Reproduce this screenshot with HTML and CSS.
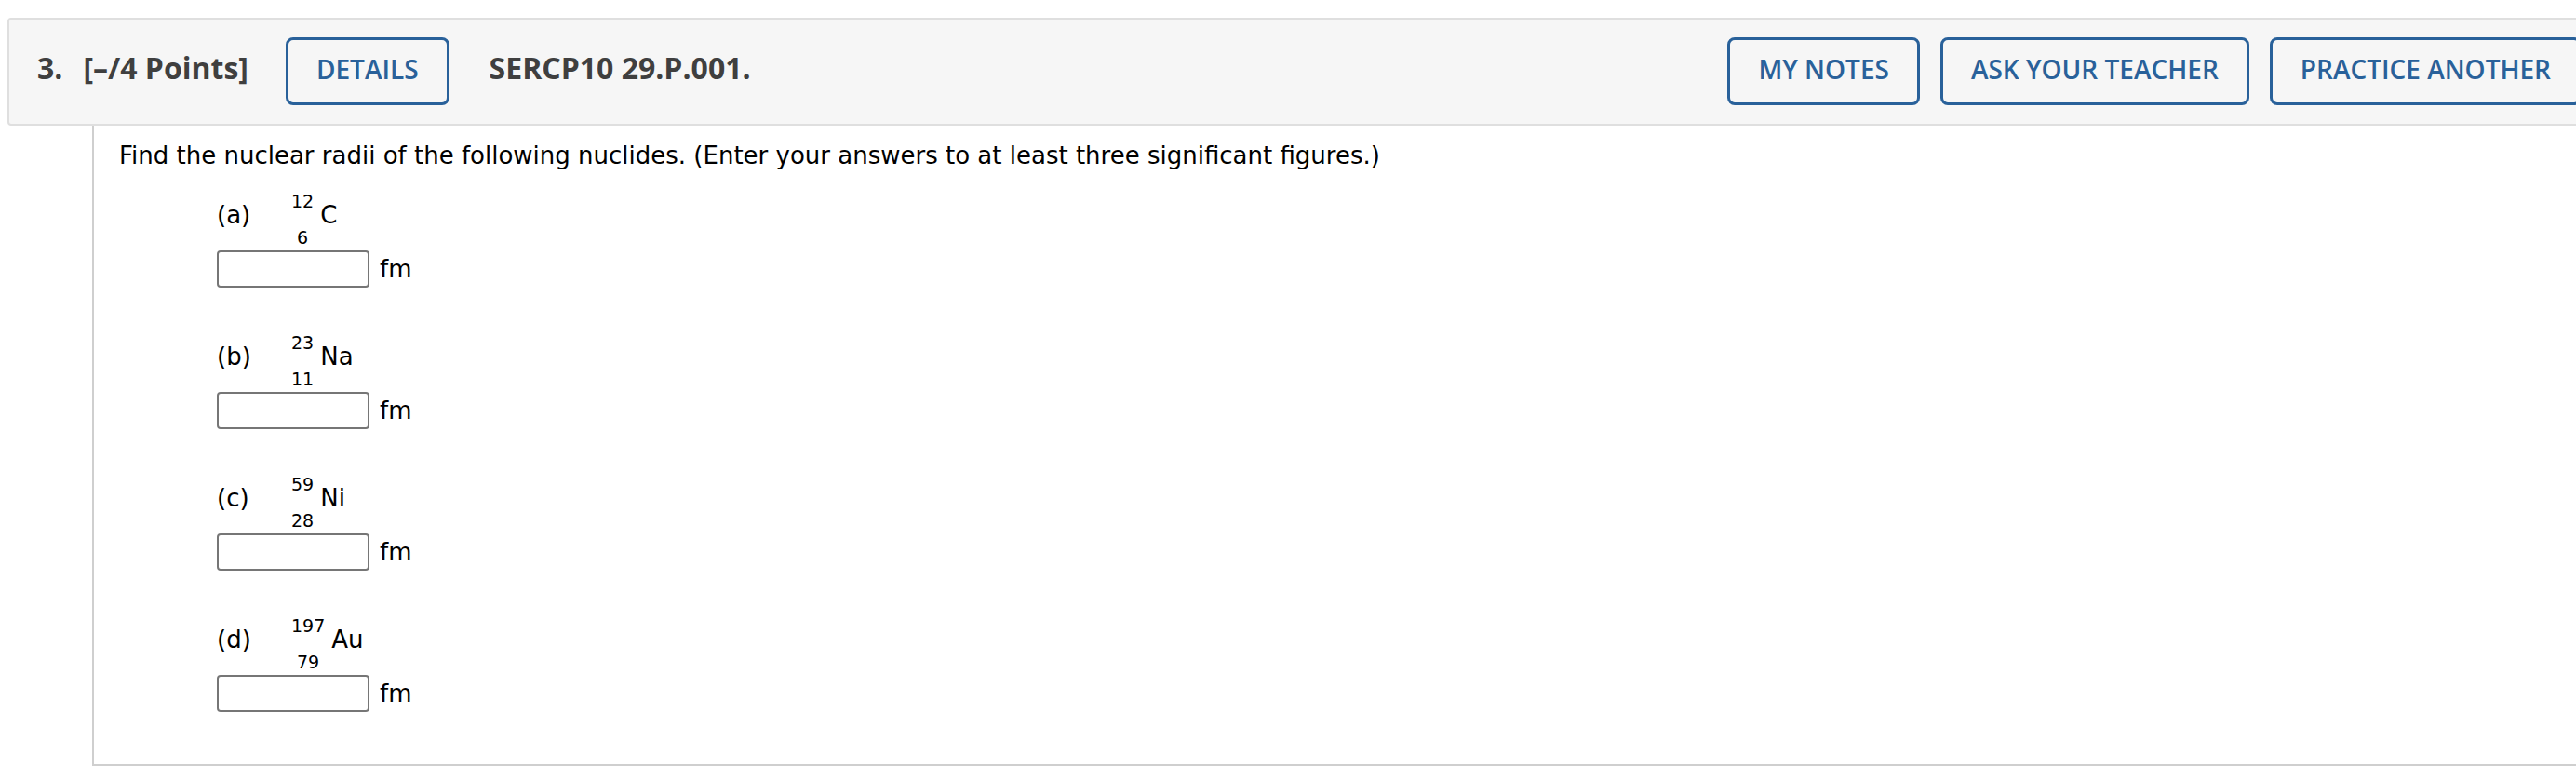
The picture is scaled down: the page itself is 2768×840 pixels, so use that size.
FILE: index.html
```html
<!DOCTYPE html>
<html lang="en">
<head>
<meta charset="utf-8">
<title>SERCP10 29.P.001.</title>
<link rel="stylesheet" href="styles.css">
</head>
<body>
<div class="page">
  <div class="q-header">
    <span class="q-title q-num">3.</span>
    <span class="q-title q-points">[–/4 Points]</span>
    <button class="btn btn-details" type="button">DETAILS</button>
    <span class="q-title q-code">SERCP10 29.P.001.</span>
    <div class="q-actions">
      <button class="btn" type="button">MY NOTES</button>
      <button class="btn" type="button">ASK YOUR TEACHER</button>
      <button class="btn" type="button">PRACTICE ANOTHER</button>
    </div>
  </div>
  <div class="q-body">
    <p class="prompt">Find the nuclear radii of the following nuclides. (Enter your answers to at least three significant figures.)</p>
    <div class="parts">
      <div class="part">
        <div class="part-head">
          <span class="part-label">(a)</span>
          <span class="nuclide">
            <span class="nums"><span class="mass">12</span><span class="atomic">6</span></span>
            <span class="symbol">C</span>
          </span>
        </div>
        <div class="answer"><input class="answer-input" type="text"><span class="unit">fm</span></div>
      </div>
      <div class="part">
        <div class="part-head">
          <span class="part-label">(b)</span>
          <span class="nuclide">
            <span class="nums"><span class="mass">23</span><span class="atomic">11</span></span>
            <span class="symbol">Na</span>
          </span>
        </div>
        <div class="answer"><input class="answer-input" type="text"><span class="unit">fm</span></div>
      </div>
      <div class="part">
        <div class="part-head">
          <span class="part-label">(c)</span>
          <span class="nuclide">
            <span class="nums"><span class="mass">59</span><span class="atomic">28</span></span>
            <span class="symbol">Ni</span>
          </span>
        </div>
        <div class="answer"><input class="answer-input" type="text"><span class="unit">fm</span></div>
      </div>
      <div class="part">
        <div class="part-head">
          <span class="part-label">(d)</span>
          <span class="nuclide">
            <span class="nums"><span class="mass">197</span><span class="atomic">79</span></span>
            <span class="symbol">Au</span>
          </span>
        </div>
        <div class="answer"><input class="answer-input" type="text"><span class="unit">fm</span></div>
      </div>
    </div>
  </div>
</div>
</body>
</html>
```
FILE: styles.css
```css
html, body {
  margin: 0;
  padding: 0;
  background: #ffffff;
  overflow: hidden;
}

.page {
  width: 2798px;
  padding: 19px 0 0 8px;
}

.q-header {
  display: flex;
  align-items: baseline;
  background: #f6f6f6;
  border: 2px solid #dfdfdf;
  border-radius: 4px;
  padding: 19px 30px 20px 30px;
}

.q-title {
  font-family: "Open Sans", "Liberation Sans", sans-serif;
  font-weight: 700;
  font-size: 32px;
  color: #3f3f3f;
}

.q-num {
  margin-right: 22px;
}

.q-points {
  margin-right: 40px;
}

.q-code {
  margin-left: 43px;
}

.q-actions {
  margin-left: auto;
  display: flex;
  align-items: baseline;
  gap: 22px;
}

.btn {
  font-family: "Open Sans", "Liberation Sans", sans-serif;
  font-weight: 600;
  font-size: 28px;
  line-height: 38px;
  color: #29619a;
  background: transparent;
  border: 3px solid #29619a;
  border-radius: 8px;
  padding: 12px 30px 17px;
  margin: 0;
  white-space: nowrap;
}

.q-body {
  margin-left: 91px;
  border-left: 2px solid #cfcfcf;
  border-bottom: 2px solid #cfcfcf;
  padding: 16px 0 56px 27px;
  font-family: "DejaVu Sans", Verdana, sans-serif;
  color: #000000;
}

.prompt {
  margin: 0 0 23px;
  font-size: 26px;
  line-height: 32px;
}

.parts {
  margin-left: 105px;
  display: flex;
  flex-direction: column;
  gap: 49px;
}

.part-head {
  display: flex;
  align-items: flex-start;
  height: 59px;
}

.part-label {
  width: 80px;
  margin-top: 9px;
  font-size: 26px;
  line-height: 32px;
}

.nuclide {
  display: flex;
  align-items: flex-start;
}

.nums {
  display: flex;
  flex-direction: column;
  align-items: center;
  font-size: 19px;
  line-height: 20px;
}

.atomic {
  margin-top: 19px;
}

.symbol {
  margin-left: 7px;
  margin-top: 9px;
  font-size: 26px;
  line-height: 32px;
}

.answer {
  display: flex;
  align-items: center;
  margin-top: 4px;
}

.answer-input {
  width: 164px;
  height: 40px;
  box-sizing: border-box;
  margin: 0;
  padding: 0 6px;
  border: 2px solid #767676;
  border-radius: 4px;
  background: #ffffff;
}

.unit {
  margin-left: 11px;
  font-size: 26px;
  line-height: 32px;
}
```
